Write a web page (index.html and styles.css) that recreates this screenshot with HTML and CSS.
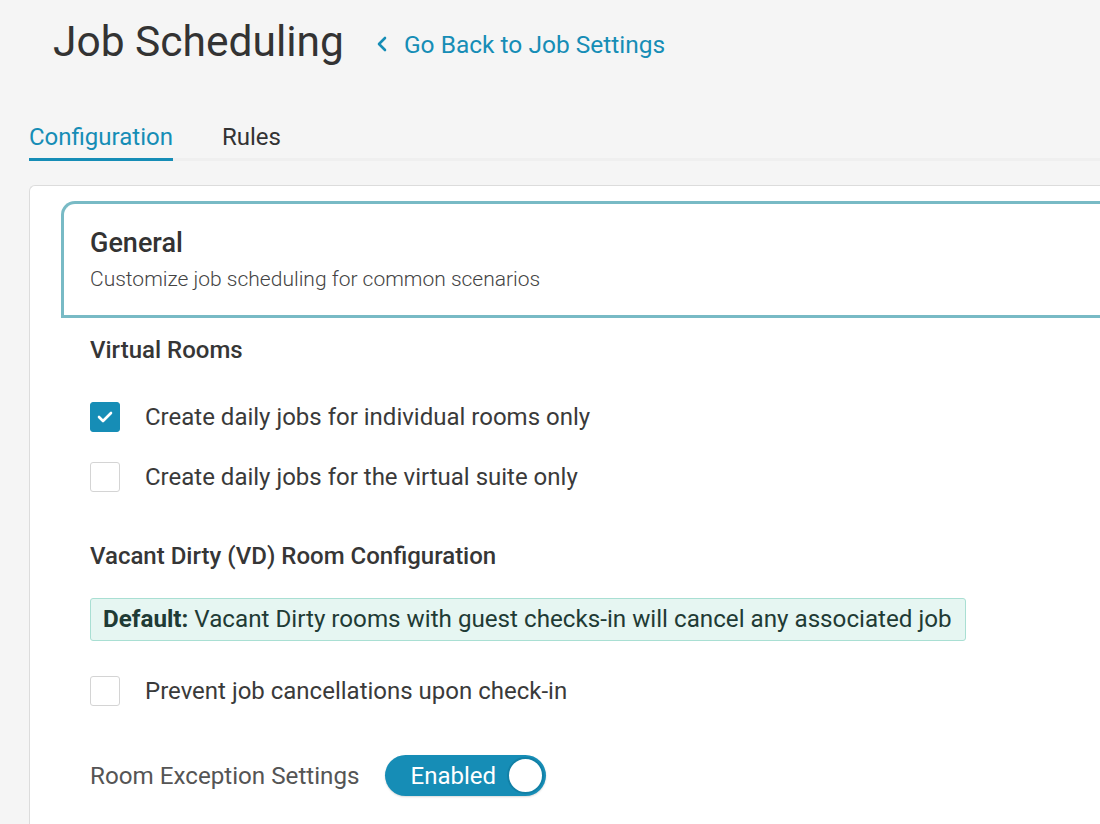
FILE: index.html
```html
<!DOCTYPE html>
<html lang="en">
<head>
  <meta charset="UTF-8" />
  <title>Job Scheduling</title>
  <link rel="stylesheet" href="styles.css">
</head>
<body>

  <header class="page-head">
    <h1>Job Scheduling</h1>
    <a class="back-link" href="#">
      <svg width="12" height="18" viewBox="0 0 12 18"><polyline points="9,3 3,9 9,15" fill="none" stroke="#168db6" stroke-width="2.6" stroke-linecap="round" stroke-linejoin="round"/></svg>
      <span>Go Back to Job Settings</span>
    </a>
  </header>

  <nav class="tabs">
    <a class="tab active" href="#">Configuration</a>
    <a class="tab" href="#">Rules</a>
  </nav>

  <div class="card">
    <div class="section-head">
      <h2>General</h2>
      <p>Customize job scheduling for common scenarios</p>
    </div>

    <div class="section-body">
      <h3>Virtual Rooms</h3>
      <label class="check first">
        <span class="box checked">
          <svg width="16" height="12" viewBox="0 0 16 12"><polyline points="2,6 6,10 14,2" fill="none" stroke="#fff" stroke-width="2.6" stroke-linecap="round" stroke-linejoin="round"/></svg>
        </span>
        <span>Create daily jobs for individual rooms only</span>
      </label>
      <label class="check second">
        <span class="box"></span>
        <span>Create daily jobs for the virtual suite only</span>
      </label>

      <h3 class="vd-title">Vacant Dirty (VD) Room Configuration</h3>
      <div class="notice"><b>Default:</b> Vacant Dirty rooms with guest checks-in will cancel any associated job</div>
      <label class="check third">
        <span class="box"></span>
        <span>Prevent job cancellations upon check-in</span>
      </label>

      <div class="setting-row">
        <span class="setting-label">Room Exception Settings</span>
        <button class="toggle">
          <span>Enabled</span>
          <span class="knob"></span>
        </button>
      </div>
    </div>
  </div>

</body>
</html>
```

FILE: styles.css
```css
body {
  margin: 0;
  font-family: Roboto, 'Liberation Sans', sans-serif;
  background-color: #f5f5f5;
  color: #363636;
  height: 824px;
  overflow: hidden;
}

.page-head {
  display: flex;
  align-items: center;
  gap: 32px;
  padding: 18px 0 0 53px;
  height: 48px;
}

.page-head h1 {
  margin: 0;
  font-size: 42.5px;
  font-weight: 400;
  color: #333;
  line-height: 48px;
}

.back-link {
  display: flex;
  align-items: center;
  gap: 16px;
  color: #168db6;
  text-decoration: none;
  font-size: 24.5px;
  margin-top: 4px;
}

.tabs {
  display: flex;
  gap: 49px;
  margin-top: 56px;
  margin-left: 29px;
  border-bottom: 3px solid #efefef;
}

.tab {
  font-size: 24px;
  color: #333;
  text-decoration: none;
  line-height: 30px;
  padding-bottom: 6px;
  margin-bottom: -3px;
  border-bottom: 3px solid transparent;
}

.tab.active {
  color: #168db6;
  border-bottom-color: #168db6;
}

.card {
  margin: 24px 0 0 29px;
  background: #fff;
  border: 1px solid #dcdcdc;
  border-right: none;
  border-bottom: none;
  border-radius: 6px 0 0 0;
  padding: 15px 0 0 31px;
  height: 640px;
}

.section-head {
  border: 3px solid #78bac5;
  border-right: none;
  border-radius: 14px 0 0 0;
  padding: 23px 0 23px 26px;
}

.section-head h2 {
  margin: 0;
  font-size: 27px;
  font-weight: 500;
  line-height: 32px;
  color: #333;
}

.section-head p {
  margin: 7px 0 0;
  font-size: 21px;
  font-weight: 300;
  line-height: 26px;
  color: #444;
}

.section-body {
  padding-left: 29px;
}

.section-body h3 {
  margin: 18px 0 0;
  font-size: 24px;
  font-weight: 500;
  line-height: 28px;
  color: #363636;
}

.section-body h3.vd-title {
  margin-top: 50px;
}

.check {
  display: flex;
  align-items: center;
  gap: 25px;
  font-size: 24px;
  line-height: 30px;
  color: #3a3a3a;
}

.check.first {
  margin-top: 38px;
}

.check.second {
  margin-top: 30px;
}

.check.third {
  margin-top: 35px;
}

.box {
  width: 28px;
  height: 28px;
  border: 1px solid #d4d4d4;
  border-radius: 3px;
  display: flex;
  align-items: center;
  justify-content: center;
  flex-shrink: 0;
}

.box.checked {
  background: #168db6;
  border-color: #168db6;
}

.notice {
  display: inline-block;
  margin-top: 28px;
  padding: 0 13px 0 12px;
  height: 41px;
  line-height: 41px;
  background: #e6f6f2;
  border: 1px solid #a9dfd3;
  border-radius: 3px;
  font-size: 24.2px;
  color: #1f3b35;
}

.notice b {
  font-weight: 700;
}

.setting-row {
  display: flex;
  align-items: center;
  gap: 25px;
  margin-top: 49px;
}

.setting-label {
  font-size: 24.2px;
  color: #555;
}

.toggle {
  display: flex;
  align-items: center;
  justify-content: space-between;
  width: 161px;
  height: 41px;
  padding: 0 2px 0 26px;
  border: none;
  border-radius: 21px;
  background: #168db6;
  color: #fff;
  font-family: inherit;
  font-size: 24px;
  box-shadow: 0 1px 2px rgba(0, 0, 0, 0.15);
}

.knob {
  width: 33px;
  height: 33px;
  border-radius: 50%;
  background: #fff;
  border: 2px solid #1280a6;
}
```
